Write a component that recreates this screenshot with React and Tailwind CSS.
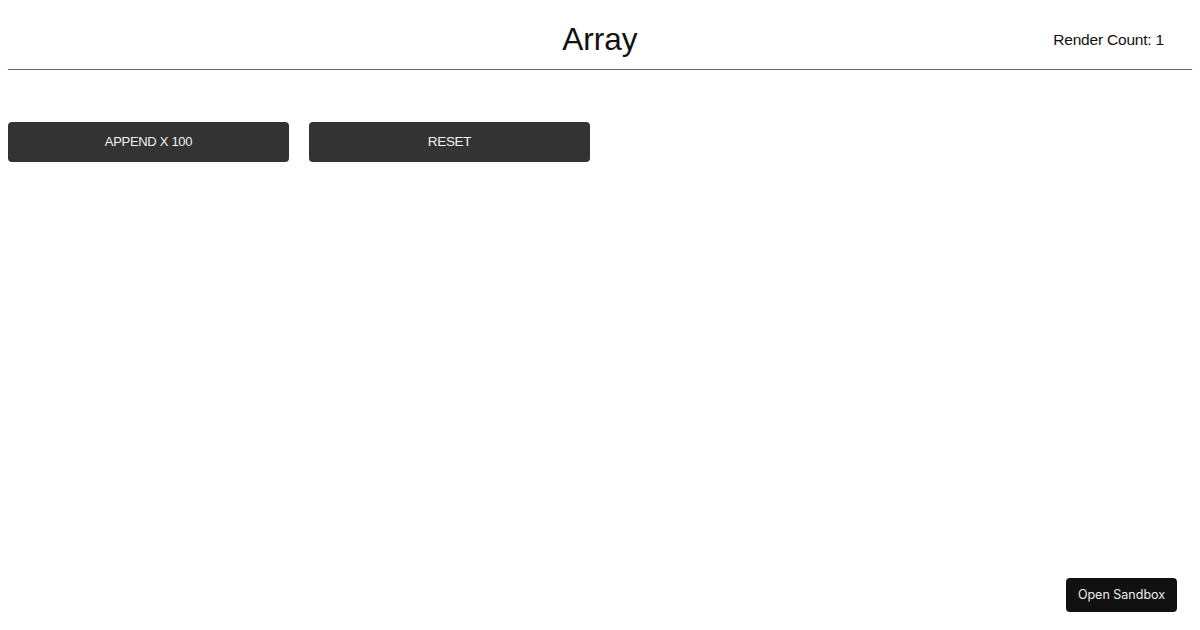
export default function App() {
  return (
    <div className="min-h-[630px] bg-white p-2" style={{ fontFamily: '"Liberation Sans", Arial, sans-serif' }}>
      <header className="relative flex h-[62px] items-center justify-center border-b border-[#5b6885]">
        <h1 className="mt-[3px] text-[31.5px] leading-none text-[#111]">Array</h1>
        <div className="absolute right-[28px] top-1/2 mt-[1px] -translate-y-1/2 text-[15.5px] tracking-[-0.2px] text-[#111]">Render Count: 1</div>
      </header>
      <div className="mt-[52px] flex gap-5">
        <button className="h-10 w-[281px] rounded bg-[#333] text-[13px] tracking-[-0.3px] text-[#f2f2f2]">APPEND X 100</button>
        <button className="h-10 w-[281px] rounded bg-[#333] text-[13.5px] tracking-[-0.3px] text-[#f2f2f2]">RESET</button>
      </div>
      <button
        className="fixed bottom-[18px] right-[23px] h-[34px] w-[111px] rounded bg-[#111] text-[12.5px] text-[#eee]"
        style={{ fontFamily: 'Inter, "Liberation Sans", sans-serif' }}
      >
        Open Sandbox
      </button>
    </div>
  );
}
